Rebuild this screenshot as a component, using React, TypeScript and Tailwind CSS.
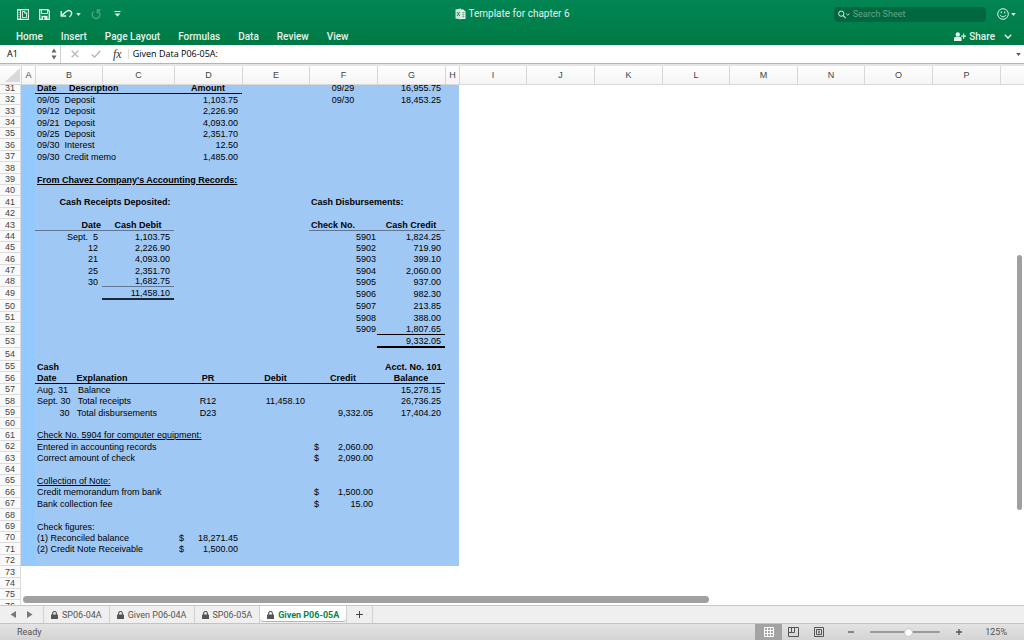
import React from "react";

type Cell = { text: string; look?: string; dollar?: boolean };
type Row = { n: number; h: string; cells?: Record<string, Cell> };

const S = "h-[11px]";
const M = "h-[12px]";
const L = "h-[13px]";

const columns = "ABCDEFGHIJKLMNOP".split("");
const columnWidths = [
  "w-[21px]",
  "w-[14px]",
  "w-[67px]",
  "w-[72px]",
  "w-[68px]",
  "w-[67px]",
  "w-[68px]",
  "w-[68px]",
  "w-[14px]",
  "w-[67px]",
  "w-[68px]",
  "w-[68px]",
  "w-[67px]",
  "w-[68px]",
  "w-[67px]",
  "w-[68px]",
  "w-[68px]",
];

const line = "border-b border-black";
const softLine = "border-b border-[#5f7694]";

const left = (text: string, look = ""): Cell => ({ text, look: `pl-0.5 ${look}` });
const num = (text: string, look = ""): Cell => ({ text, look: `pr-1 text-right ${look}` });
const check = (text: string): Cell => ({ text, look: "pr-px text-right" });
const mid = (text: string, look = ""): Cell => ({ text, look: `text-center ${look}` });
const money = (text: string): Cell => ({ text, look: "pr-1 pl-[5px]", dollar: true });
const blank = (look: string): Cell => ({ text: "", look });

const rows: Row[] = [
  {
    n: 31,
    h: M,
    cells: {
      B: left("Date     Description", `font-bold ${line}`),
      C: blank(line),
      D: mid("Amount", `font-bold ${line}`),
      F: mid("09/29"),
      G: num("16,955.75"),
    },
  },
  {
    n: 32,
    h: S,
    cells: {
      B: left("09/05  Deposit"),
      D: num("1,103.75"),
      F: mid("09/30"),
      G: num("18,453.25"),
    },
  },
  { n: 33, h: M, cells: { B: left("09/12  Deposit"), D: num("2,226.90") } },
  { n: 34, h: S, cells: { B: left("09/21  Deposit"), D: num("4,093.00") } },
  { n: 35, h: S, cells: { B: left("09/25  Deposit"), D: num("2,351.70") } },
  { n: 36, h: M, cells: { B: left("09/30  Interest"), D: num("12.50") } },
  { n: 37, h: S, cells: { B: left("09/30  Credit memo"), D: num("1,485.00") } },
  { n: 38, h: M },
  {
    n: 39,
    h: S,
    cells: { B: left("From Chavez Company's Accounting Records:", "font-bold underline") },
  },
  { n: 40, h: S },
  {
    n: 41,
    h: M,
    cells: {
      B: left("         Cash Receipts Deposited:", "font-bold"),
      F: left("Cash Disbursements:", "font-bold"),
    },
  },
  { n: 42, h: S },
  {
    n: 43,
    h: M,
    cells: {
      B: { text: "Date", look: `pr-px text-right font-bold ${softLine}` },
      C: mid("Cash Debit", `font-bold ${softLine}`),
      F: left("Check No.", `font-bold ${softLine}`),
      G: mid("Cash Credit", `font-bold ${softLine}`),
    },
  },
  {
    n: 44,
    h: S,
    cells: { B: num("Sept.  5"), C: num("1,103.75"), F: check("5901"), G: num("1,824.25") },
  },
  {
    n: 45,
    h: S,
    cells: { B: num("12"), C: num("2,226.90"), F: check("5902"), G: num("719.90") },
  },
  {
    n: 46,
    h: M,
    cells: { B: num("21"), C: num("4,093.00"), F: check("5903"), G: num("399.10") },
  },
  {
    n: 47,
    h: S,
    cells: { B: num("25"), C: num("2,351.70"), F: check("5904"), G: num("2,060.00") },
  },
  {
    n: 48,
    h: S,
    cells: { B: num("30"), C: num("1,682.75", softLine), F: check("5905"), G: num("937.00") },
  },
  {
    n: 49,
    h: L,
    cells: {
      C: num("11,458.10", "border-b-2 border-[#1c2838]"),
      F: check("5906"),
      G: num("982.30"),
    },
  },
  { n: 50, h: M, cells: { F: check("5907"), G: num("213.85") } },
  { n: 51, h: S, cells: { F: check("5908"), G: num("388.00") } },
  { n: 52, h: M, cells: { F: check("5909"), G: num("1,807.65", line) } },
  { n: 53, h: L, cells: { G: num("9,332.05", "border-b-2 border-black") } },
  { n: 54, h: L },
  { n: 55, h: S, cells: { B: left("Cash", "font-bold"), G: mid("  Acct. No. 101", "font-bold") } },
  {
    n: 56,
    h: M,
    cells: {
      B: left("Date        Explanation", `font-bold ${line}`),
      C: blank(line),
      D: mid("PR", `font-bold ${line}`),
      E: mid("Debit", `font-bold ${line}`),
      F: mid("Credit", `font-bold ${line}`),
      G: mid("Balance", `font-bold ${line}`),
    },
  },
  { n: 57, h: S, cells: { B: left("Aug. 31    Balance"), G: num("15,278.15") } },
  {
    n: 58,
    h: M,
    cells: {
      B: left("Sept. 30   Total receipts"),
      D: mid("R12"),
      E: num("11,458.10"),
      G: num("26,736.25"),
    },
  },
  {
    n: 59,
    h: S,
    cells: {
      B: left("         30   Total disbursements"),
      D: mid("D23"),
      F: num("9,332.05"),
      G: num("17,404.20"),
    },
  },
  { n: 60, h: S },
  { n: 61, h: M, cells: { B: left("Check No. 5904 for computer equipment:", "underline") } },
  { n: 62, h: S, cells: { B: left("Entered in accounting records"), F: money("2,060.00") } },
  { n: 63, h: M, cells: { B: left("Correct amount of check"), F: money("2,090.00") } },
  { n: 64, h: S },
  { n: 65, h: S, cells: { B: left("Collection of Note:", "underline") } },
  { n: 66, h: M, cells: { B: left("Credit memorandum from bank"), F: money("1,500.00") } },
  { n: 67, h: S, cells: { B: left("Bank collection fee"), F: money("15.00") } },
  { n: 68, h: M },
  { n: 69, h: S, cells: { B: left("Check figures:") } },
  { n: 70, h: S, cells: { B: left("(1) Reconciled balance"), D: money("18,271.45") } },
  { n: 71, h: M, cells: { B: left("(2) Credit Note Receivable"), D: money("1,500.00") } },
  { n: 72, h: S },
  { n: 73, h: M },
  { n: 74, h: S },
  { n: 75, h: S },
  { n: 76, h: M },
];

const Caret: React.FC<{ className?: string }> = ({ className = "" }) => (
  <svg viewBox="0 0 6 4" className={`h-[3px] w-[5px] ${className}`} fill="currentColor">
    <path d="M0 0h6L3 4z" />
  </svg>
);

const QuickAccess: React.FC = () => (
  <div className="flex flex-1 items-center pl-[17px]">
    <button aria-label="New from template">
      <svg viewBox="0 0 12 11" className="h-[11px] w-3" fill="none" stroke="currentColor">
        <path d="M.6.6h10.8v9.8H.6zM3.5.6v9.8" strokeWidth="1.1" />
        <path d="M5.5 8.5v-6H8l1.5 1.5v4.5zM7.7 2.5v1.8h1.8" strokeWidth=".9" />
        <path d="M2 1v9" strokeWidth=".7" strokeDasharray="1 1" />
      </svg>
    </button>
    <button aria-label="Save" className="ml-2.5">
      <svg viewBox="0 0 11 11" className="size-[11px]" fill="none" stroke="currentColor">
        <path d="M.7.7h8.2l1.4 1.4v8.2H.7z" strokeWidth="1.3" />
        <path d="M2.5.8v3.7h6V.8" strokeWidth="1" />
        <path d="M2.5 10.5V6.8h6v3.7z" fill="currentColor" stroke="none" />
        <path d="M4 8.2h1.4v2.3H4z" fill="#007f4b" stroke="none" />
      </svg>
    </button>
    <button aria-label="Undo" className="ml-2.5">
      <svg viewBox="0 0 13 10" className="h-2.5 w-[13px]" fill="none" stroke="currentColor">
        <path
          d="M1.8 6.4L6 2.7C7.6 1.3 9.6 1.1 10.9 2.4c1.400 1.600.6 3.800-1.400 5.600"
          strokeWidth="1.4"
        />
        <path d="M1.2 2v5h5" strokeWidth="1.4" />
      </svg>
    </button>
    <button aria-label="Undo history" className="ml-[3px]">
      <Caret />
    </button>
    <button aria-label="Repeat" className="ml-2.5 text-[#4fa57e]">
      <svg viewBox="0 0 10 11" className="h-[11px] w-2.5" fill="none" stroke="currentColor">
        <path d="M2.6 2.6a3.9 3.9 0 1 0 4.7-.2" strokeWidth="1.3" />
        <path d="M9.5 1H6.3v3.5" strokeWidth="1.3" />
      </svg>
    </button>
    <button aria-label="Customize toolbar" className="ml-[13px]">
      <svg viewBox="0 0 7 6" className="h-1.5 w-[7px]" fill="currentColor">
        <path d="M.5 0h6v1h-6zM.5 2.5h6l-3 3z" />
      </svg>
    </button>
  </div>
);

const TitleBar: React.FC = () => (
  <div className="flex h-7 items-center">
    <QuickAccess />
    <h1 className="flex items-center gap-[3px] text-[10px] leading-3">
      <svg viewBox="0 0 11 12" className="h-3 w-[11px]">
        <path d="M4 1.5h4.5l2 2V11H4z" fill="#eef7f2" />
        <path d="M6.8 4.5h2.8M6.8 6.5h2.8M6.8 8.5h2.8M8.2 4v6" stroke="#4d9f7a" strokeWidth=".6" />
        <path d="M.5 1.5L6 .5v11l-5.5-1z" fill="#cfe6da" />
        <path d="M2 4l2.7 4M4.7 4L2 8" stroke="#2b8a5f" strokeWidth="1" />
      </svg>
      Template for chapter 6
    </h1>
    <div className="flex flex-1 items-center justify-end pr-2 pl-[9px]">
      <label className="flex h-[15px] w-[152px] items-center rounded-sm bg-[#01673f] pl-1">
        <svg viewBox="0 0 9 9" className="size-[9px]" fill="none" stroke="currentColor">
          <circle cx="3.6" cy="3.6" r="2.9" strokeWidth="1.1" />
          <path d="M5.8 5.8l2.8 2.8" strokeWidth="1.2" />
        </svg>
        <svg viewBox="0 0 4 3" className="h-[3px] w-1" fill="none" stroke="currentColor">
          <path d="M.3.6L2 2.2 3.7.6" />
        </svg>
        <input
          aria-label="Search Sheet"
          placeholder="Search Sheet"
          className="ml-[3px] w-full min-w-0 text-[9px] leading-3 outline-none placeholder:text-[#65a487]"
        />
      </label>
      <button aria-label="Feedback" className="ml-[11px]">
        <svg viewBox="0 0 12 12" className="size-3" fill="none" stroke="currentColor">
          <circle cx="6" cy="6" r="5.3" />
          <path d="M3.3 7c.6 2.3 4.8 2.3 5.4 0" />
          <path d="M4.3 3.5v1.8M7.7 3.5v1.8" strokeWidth="1.1" />
        </svg>
      </button>
      <Caret className="ml-0.5" />
    </div>
  </div>
);

const RibbonTabs: React.FC = () => (
  <nav className="flex h-[17px] items-center justify-between pr-3 pl-4 text-[10px] leading-3 font-medium">
    <div className="flex gap-[18px]">
      <a href="#home">Home</a>
      <a href="#insert">Insert</a>
      <a href="#layout">Page Layout</a>
      <a href="#formulas">Formulas</a>
      <a href="#data">Data</a>
      <a href="#review">Review</a>
      <a href="#view">View</a>
    </div>
    <div className="flex items-center">
      <button className="flex items-center gap-[3px]">
        <svg viewBox="0 0 12 9" className="h-[9px] w-3" fill="currentColor">
          <circle cx="3.8" cy="2.4" r="2.2" />
          <path d="M0 9V6.5Q0 5 2 4.800h3.600q2 .2 2 1.700V9z" />
          <path d="M9 1.5h1.2v2H12v1.200h-1.800v2H9v-2H7.300V3.500H9z" />
        </svg>
        Share
      </button>
      <button aria-label="Collapse ribbon" className="ml-[9px]">
        <svg viewBox="0 0 8 5" className="h-[5px] w-2" fill="none" stroke="currentColor">
          <path d="M.8.8L4 4 7.2.8" strokeWidth="1.5" />
        </svg>
      </button>
    </div>
  </nav>
);

const FormulaBar: React.FC = () => (
  <div className="flex h-[19px] items-center border-b border-[#b4b4b4] bg-white text-[9px] leading-3 text-black">
    <input
      aria-label="Name box"
      defaultValue="A1"
      className="w-[51px] pl-[7px] font-['Open_Sans',sans-serif] outline-none"
    />
    <svg viewBox="0 0 6 12" className="h-3 w-1.5 text-[#666]" fill="currentColor">
      <path d="M.5 4.5h5L3 .5zM.5 7.5h5L3 11.5z" />
    </svg>
    <div className="ml-[3px] h-full w-px bg-[#d0d0d0]" />
    <button aria-label="Cancel" className="ml-2.5 text-[#b8b8b8]">
      <svg viewBox="0 0 8 8" className="size-2" fill="none" stroke="currentColor">
        <path d="M.7.7l6.6 6.6M7.3.7L.7 7.3" strokeWidth="1.3" />
      </svg>
    </button>
    <button aria-label="Enter" className="ml-3 text-[#b8b8b8]">
      <svg viewBox="0 0 10 8" className="h-2 w-2.5" fill="none" stroke="currentColor">
        <path d="M.7 4.5l2.8 2.7L9.3.8" strokeWidth="1.4" />
      </svg>
    </button>
    <button
      aria-label="Insert function"
      className="ml-3 font-['Liberation_Serif',serif] text-[12px] leading-3 text-[#333] italic"
    >
      fx
    </button>
    <div className="ml-1.5 h-2.5 w-px bg-[#ddd]" />
    <input
      aria-label="Formula"
      defaultValue="Given Data P06-05A:"
      className="ml-1 min-w-0 flex-1 font-['Open_Sans',sans-serif] outline-none"
    />
    <Caret className="mr-[3px] text-[#555]" />
  </div>
);

const Columns: React.FC = () => (
  <colgroup>
    {columnWidths.map((w, i) => (
      <col key={i} className={w} />
    ))}
    <col />
  </colgroup>
);

const fill = (col: string, n: number) => {
  if (n > 72 || col > "H") return "";
  return col === "A" ? "bg-[#92c9ff]" : "bg-[#a0c8f4]";
};

const Sheet: React.FC = () => (
  <div className="flex min-h-0 flex-1 flex-col bg-white font-['Liberation_Sans',Arial,sans-serif] text-[9px] leading-[10px] text-black">
    <table className="w-full table-fixed border-separate border-spacing-0">
      <Columns />
      <thead>
        <tr className="h-[19px] bg-linear-to-b from-white to-[#f4f4f4] text-[#444]">
          <th className="border-b border-[#d4d4d4] p-0">
            <svg viewBox="0 0 15 14" className="ml-[5px] h-3.5 w-[15px]">
              <path d="M15 0v14H0z" fill="#d9d9d9" />
            </svg>
          </th>
          {columns.map((c) => (
            <th key={c} className="border-b border-l border-[#d8d8d8] p-0 font-normal">
              {c}
            </th>
          ))}
          <th className="border-b border-l border-[#d8d8d8] p-0"></th>
        </tr>
      </thead>
    </table>
    <div className="relative min-h-0 flex-1 overflow-hidden">
      <table className="-mt-[3px] w-full table-fixed border-separate border-spacing-0 whitespace-pre">
        <Columns />
        <tbody>
          {rows.map(({ n, h, cells }) => (
            <tr key={n} className={h}>
              <th className="border-r border-b border-[#dcdcdc] bg-[#fafafa] p-0 text-center font-normal text-[#444]">
                {n}
              </th>
              {columns.map((c) => {
                const cell = cells?.[c];
                return (
                  <td key={c} className={`py-0 ${fill(c, n)} ${cell?.look ?? ""}`}>
                    {cell?.dollar ? (
                      <div className="flex justify-between">
                        <span>$</span>
                        <span>{cell.text}</span>
                      </div>
                    ) : (
                      cell?.text
                    )}
                  </td>
                );
              })}
              <td></td>
            </tr>
          ))}
        </tbody>
      </table>
      <div className="absolute bottom-0.5 left-[23px] h-[7px] w-[67%] rounded-full bg-[#a0a0a0]" />
      <div className="absolute top-[170px] right-0.5 h-[49%] w-[5px] rounded-full bg-[#a0a0a0]" />
    </div>
  </div>
);

const Lock: React.FC = () => (
  <svg viewBox="0 0 7 8" className="h-2 w-[7px]" fill="none">
    <path d="M1.6 4V2.4a1.9 1.9 0 0 1 3.8 0V4" stroke="#555" strokeWidth="1.1" />
    <rect y="3.5" width="7" height="4.5" rx=".5" fill="#555" />
  </svg>
);

const SheetTabs: React.FC = () => (
  <div className="flex h-[18px] border-t border-[#c8c8c8] bg-[#efefef] text-[9px] leading-3 text-[#555]">
    <div className="flex w-11 items-center gap-[11px] border-r border-[#d2d2d2] pl-2.5 text-[#777]">
      <button aria-label="Previous sheet">
        <svg viewBox="0 0 6 7" className="h-[7px] w-1.5" fill="currentColor">
          <path d="M6 0v7L.5 3.5z" />
        </svg>
      </button>
      <button aria-label="Next sheet">
        <svg viewBox="0 0 6 7" className="h-[7px] w-1.5" fill="currentColor">
          <path d="M0 0v7l5.500-3.500z" />
        </svg>
      </button>
    </div>
    {["SP06-04A", "Given P06-04A", "SP06-05A"].map((name) => (
      <button key={name} className="flex items-center gap-1 border-r border-[#d2d2d2] px-[7px]">
        <Lock />
        {name}
      </button>
    ))}
    <button className="mb-px flex items-center gap-1 rounded-b-sm border-b border-[#b5b5b5] bg-white px-[7px] pt-0.5 font-bold text-[#058650]">
      <Lock />
      Given P06-05A
    </button>
    <button aria-label="Add sheet" className="border-x border-[#d2d2d2] px-[9px] text-[#444]">
      <svg viewBox="0 0 7 7" className="size-[7px]" stroke="currentColor">
        <path d="M3.5 0v7M0 3.5h7" />
      </svg>
    </button>
  </div>
);

const StatusBar: React.FC = () => (
  <div className="flex h-[17px] items-center border-t border-[#c4c4c4] bg-linear-to-b from-[#e3e3e3] to-[#d4d4d4] text-[9px] leading-3 text-[#555]">
    <span className="flex-1 pl-[17px]">Ready</span>
    <button
      aria-label="Normal view"
      className="flex h-full w-[27px] items-center justify-center bg-[#a3a3a3] text-white"
    >
      <svg viewBox="0 0 10 10" className="size-2.5" fill="none" stroke="currentColor">
        <path d="M.5.5h9v9h-9zM.5 3.5h9M.5 6.5h9M3.5.5v9M6.5.5v9" />
      </svg>
    </button>
    <button aria-label="Page layout view" className="ml-1.5">
      <svg viewBox="0 0 11 10" className="h-2.5 w-[11px]" fill="none" stroke="currentColor">
        <path d="M.5.5h10v9H.5zM3.5.5v5M.5 5.5h6M6.500.5v5" />
      </svg>
    </button>
    <button aria-label="Page break view" className="ml-[15px]">
      <svg viewBox="0 0 10 10" className="size-2.5" fill="none" stroke="currentColor">
        <path d="M.5.5h9v9h-9zM2.5 2.5h5v5h-5zM4 4.2h2M4 5.8h2" />
      </svg>
    </button>
    <button aria-label="Zoom out" className="ml-6">
      <svg viewBox="0 0 6 6" className="size-1.5" stroke="currentColor">
        <path d="M0 3h6" strokeWidth="1.3" />
      </svg>
    </button>
    <input
      type="range"
      aria-label="Zoom"
      defaultValue={55}
      className="ml-4 h-0.5 w-[70px] appearance-none rounded-full bg-[#999] [&::-webkit-slider-thumb]:size-[9px] [&::-webkit-slider-thumb]:appearance-none [&::-webkit-slider-thumb]:rounded-full [&::-webkit-slider-thumb]:border [&::-webkit-slider-thumb]:border-[#c4c4c4] [&::-webkit-slider-thumb]:bg-white"
    />
    <button aria-label="Zoom in" className="ml-4">
      <svg viewBox="0 0 6 6" className="size-1.5" stroke="currentColor">
        <path d="M0 3h6M3 0v6" strokeWidth="1.3" />
      </svg>
    </button>
    <span className="mr-[17px] ml-[23px]">125%</span>
  </div>
);

const App: React.FC = () => {
  return (
    <div className="flex h-screen flex-col overflow-hidden bg-[#e6e6e6] font-[Roboto,sans-serif]">
      <header className="bg-linear-to-b from-[#018553] to-[#007a45] text-[#e4f2eb]">
        <TitleBar />
        <RibbonTabs />
      </header>
      <FormulaBar />
      <main className="flex min-h-0 flex-1 flex-col pt-0.5">
        <Sheet />
        <SheetTabs />
        <StatusBar />
      </main>
    </div>
  );
};

export default App;
